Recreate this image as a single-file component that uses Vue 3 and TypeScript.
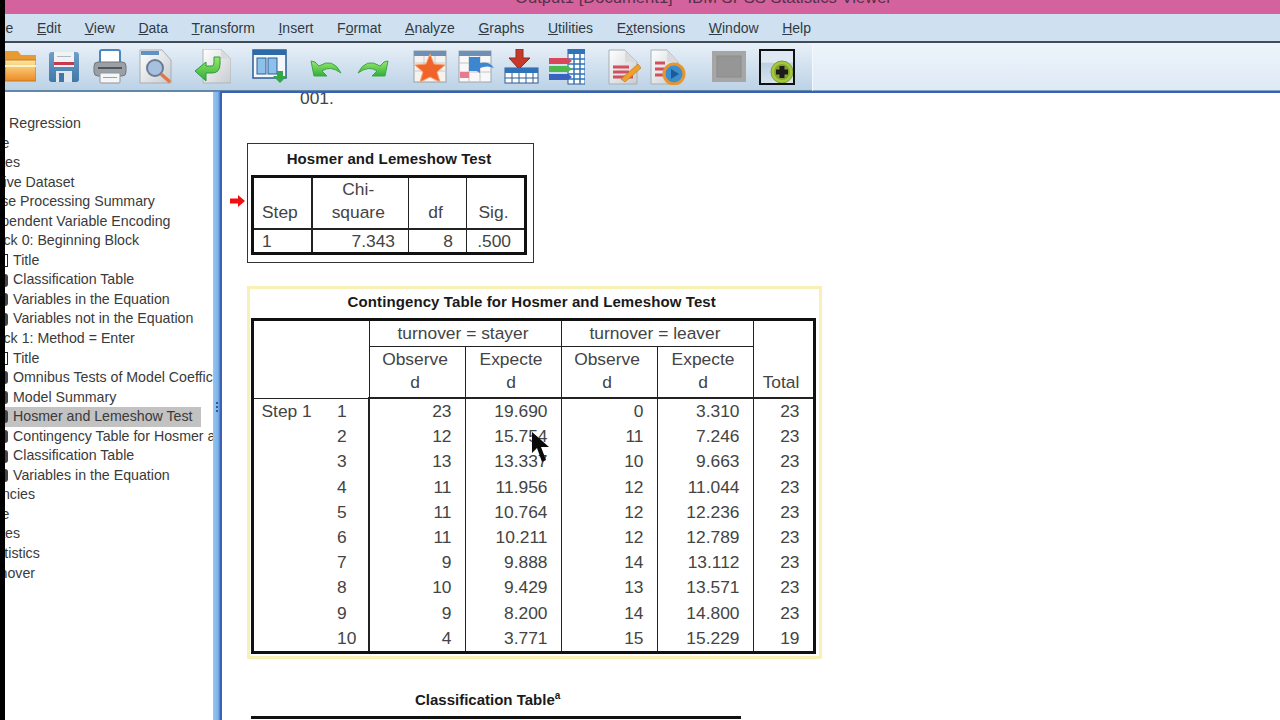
<script setup lang="ts">
interface MenuItem {
  pre: string
  key: string
  post: string
}
interface TreeRow {
  text: string
  level: 'root' | 'sub' | 'leaf' | 'title'
  selected?: boolean
}

const menus: MenuItem[] = [
  { pre: '', key: 'F', post: 'ile' },
  { pre: '', key: 'E', post: 'dit' },
  { pre: '', key: 'V', post: 'iew' },
  { pre: '', key: 'D', post: 'ata' },
  { pre: '', key: 'T', post: 'ransform' },
  { pre: '', key: 'I', post: 'nsert' },
  { pre: 'F', key: 'o', post: 'rmat' },
  { pre: '', key: 'A', post: 'nalyze' },
  { pre: '', key: 'G', post: 'raphs' },
  { pre: '', key: 'U', post: 'tilities' },
  { pre: 'E', key: 'x', post: 'tensions' },
  { pre: '', key: 'W', post: 'indow' },
  { pre: '', key: 'H', post: 'elp' }
]

const tree: TreeRow[] = [
  { text: 'Logistic Regression', level: 'root' },
  { text: 'Title', level: 'sub' },
  { text: 'Notes', level: 'sub' },
  { text: 'Active Dataset', level: 'sub' },
  { text: 'Case Processing Summary', level: 'sub' },
  { text: 'Dependent Variable Encoding', level: 'sub' },
  { text: 'Block 0: Beginning Block', level: 'sub' },
  { text: 'Title', level: 'title' },
  { text: 'Classification Table', level: 'leaf' },
  { text: 'Variables in the Equation', level: 'leaf' },
  { text: 'Variables not in the Equation', level: 'leaf' },
  { text: 'Block 1: Method = Enter', level: 'sub' },
  { text: 'Title', level: 'title' },
  { text: 'Omnibus Tests of Model Coefficients', level: 'leaf' },
  { text: 'Model Summary', level: 'leaf' },
  { text: 'Hosmer and Lemeshow Test', level: 'leaf', selected: true },
  { text: 'Contingency Table for Hosmer and Lemeshow Test', level: 'leaf' },
  { text: 'Classification Table', level: 'leaf' },
  { text: 'Variables in the Equation', level: 'leaf' },
  { text: 'Frequencies', level: 'root' },
  { text: 'Title', level: 'sub' },
  { text: 'Notes', level: 'sub' },
  { text: 'Statistics', level: 'sub' },
  { text: 'turnover', level: 'sub' }
]

const contingency: string[][] = [
  ['1', '23', '19.690', '0', '3.310', '23'],
  ['2', '12', '15.754', '11', '7.246', '23'],
  ['3', '13', '13.337', '10', '9.663', '23'],
  ['4', '11', '11.956', '12', '11.044', '23'],
  ['5', '11', '10.764', '12', '12.236', '23'],
  ['6', '11', '10.211', '12', '12.789', '23'],
  ['7', '9', '9.888', '14', '13.112', '23'],
  ['8', '10', '9.429', '13', '13.571', '23'],
  ['9', '9', '8.200', '14', '14.800', '23'],
  ['10', '4', '3.771', '15', '15.229', '19']
]
</script>

<template>
  <div class="app">
    <div class="edge" />
    <div class="window">
      <div class="titlebar">
        <span class="title-text">Output1 [Document1] - IBM SPSS Statistics Viewer</span>
      </div>

      <nav class="menubar">
        <span v-for="m in menus" :key="m.key + m.post" class="menu-item">{{ m.pre }}<u>{{ m.key }}</u>{{ m.post }}</span>
      </nav>

      <div class="toolbar">
        <div class="tools">
          <div class="group first-group">
            <svg class="tool" viewBox="0 0 36 36">
              <defs>
                <linearGradient id="gFolder" x1="0" y1="0" x2="0" y2="1">
                  <stop offset="0" stop-color="#fde7a0" />
                  <stop offset="1" stop-color="#ee8a22" />
                </linearGradient>
                <linearGradient id="gBlue" x1="0" y1="0" x2="0" y2="1">
                  <stop offset="0" stop-color="#6f9fc8" />
                  <stop offset="1" stop-color="#3f78a8" />
                </linearGradient>
                <linearGradient id="gGreen" x1="0" y1="0" x2="0" y2="1">
                  <stop offset="0" stop-color="#9be86a" />
                  <stop offset="1" stop-color="#2fae3c" />
                </linearGradient>
                <linearGradient id="gPaper" x1="0" y1="0" x2="1" y2="1">
                  <stop offset="0" stop-color="#ffffff" />
                  <stop offset="1" stop-color="#c8ccd0" />
                </linearGradient>
              </defs>
              <path d="M5 2 L18 2 L21 6 L36 6 L36 12 L5 12 Z" fill="#e89a32" />
              <path d="M5 11 L36 11 L36 32 L5 32 Z" fill="url(#gFolder)" stroke="#c9781e" />
              <path d="M5 17 L36 17" stroke="#fff3c8" stroke-width="2" />
            </svg>
            <svg class="tool" viewBox="0 0 36 36">
              <rect x="3" y="3" width="30" height="30" rx="3" fill="url(#gBlue)" />
              <rect x="8" y="3" width="20" height="15" fill="#f0f2f4" />
              <rect x="8" y="13" width="20" height="3" fill="#c8384e" />
              <rect x="11" y="7" width="14" height="1" fill="#b0b8c0" />
              <rect x="10" y="22" width="16" height="11" fill="#dfe6ec" />
              <rect x="13" y="24" width="5" height="9" fill="#3f78a8" />
            </svg>
            <svg class="tool" viewBox="0 0 36 36">
              <path d="M8 14 L8 3 Q8 1 10 1 L26 1 Q28 1 28 3 L28 14 Z" fill="#fff" stroke="#4a86bc" stroke-width="2" />
              <rect x="2" y="13" width="32" height="14" rx="4" fill="#9aa0a6" stroke="#70767c" />
              <rect x="6" y="18" width="24" height="2" fill="#50565c" />
              <rect x="8" y="24" width="20" height="10" rx="1" fill="#f4f6f8" stroke="#90969c" />
              <rect x="11" y="28" width="14" height="1" fill="#9aa0a6" />
            </svg>
            <svg class="tool" viewBox="0 0 36 36">
              <path d="M2 1 L24 1 L33 11 L33 34 L2 34 Z" fill="url(#gPaper)" stroke="#a8aeb4" />
              <rect x="3" y="2" width="18" height="4" fill="#5f93c4" />
              <circle cx="17" cy="19" r="8" fill="#a8c0e0" stroke="#6a7c94" stroke-width="2" />
              <path d="M23 25 L32 33" stroke="#e0764a" stroke-width="3.5" />
            </svg>
          </div>
          <div class="group">
            <svg class="tool" viewBox="0 0 36 36">
              <path d="M8 0 L26 0 L36 10 L36 34 L8 34 Z" fill="url(#gPaper)" stroke="#b0b4b8" />
              <path d="M26 0 L26 10 L36 10 Z" fill="#d8dadc" />
              <path d="M0 22 L11 13 L11 17 L17 17 Q19 17 19 14 L19 8 L25 8 L25 15 Q25 24 17 24 L11 24 L11 32 Z" fill="url(#gGreen)" stroke="#2d9a40" />
            </svg>
          </div>
          <div class="group">
            <svg class="tool" viewBox="0 0 36 36">
              <rect x="1" y="1" width="33" height="28" fill="#f4f8fc" stroke="#2c5c94" stroke-width="1.5" />
              <rect x="1" y="1" width="33" height="5" fill="#2f6aa8" />
              <rect x="5" y="9" width="9" height="16" fill="#8ec0ec" stroke="#2c5c94" />
              <rect x="16" y="9" width="9" height="16" fill="#8ec0ec" stroke="#2c5c94" />
              <path d="M25 22 L31 22 L31 27 L35 27 L28 34 L21 27 L25 27 Z" fill="#35a846" />
            </svg>
          </div>
          <div class="group">
            <svg class="tool" viewBox="0 0 36 36">
              <path d="M2 12 L5 27 L18 27 L13 22 Q21 16 32 24 Q24 8 10 17 L6 13 Z" fill="url(#gGreen)" stroke="#3aa84a" />
            </svg>
            <svg class="tool" viewBox="0 0 36 36">
              <path d="M34 12 L31 27 L18 27 L23 22 Q15 16 4 24 Q12 8 26 17 L30 13 Z" fill="url(#gGreen)" stroke="#3aa84a" />
            </svg>
          </div>
          <div class="group star-group">
            <svg class="tool" viewBox="0 0 36 36">
              <rect x="2" y="2" width="32" height="31" fill="#f6f2ee" stroke="#9aa0a6" />
              <rect x="2" y="2" width="32" height="5" fill="#6e8fb8" />
              <path d="M2 14 H34 M2 22 H34 M12 7 V33 M23 7 V33" stroke="#c8ccd0" />
              <path d="M18 5 L22 15 L33 16 L25 23 L28 33 L18 28 L8 33 L11 23 L3 16 L14 15 Z" fill="#f0642a" stroke="#f8a070" />
            </svg>
            <svg class="tool" viewBox="0 0 36 36">
              <rect x="1" y="2" width="32" height="31" fill="#f8f8f8" stroke="#a0a6ac" />
              <rect x="1" y="2" width="32" height="5" fill="#6e8fb8" />
              <path d="M1 14 H33 M1 23 H33 M11 7 V33 M22 7 V33" stroke="#c0c4c8" />
              <rect x="2" y="23" width="9" height="6" fill="#e87a90" />
              <rect x="11" y="8" width="11" height="14" fill="#3d86d0" />
              <path d="M12 18 L22 10 L22 14 Q31 12 36 19 Q29 16 22 19 L22 24 Z" fill="#3d86d0" />
            </svg>
            <svg class="tool" viewBox="0 0 36 36">
              <path d="M13 0 L20 0 L20 9 L27 9 L16 20 L6 9 L13 9 Z" fill="#c8382a" stroke="#8e2a20" />
              <rect x="2" y="19" width="33" height="15" fill="#fff" stroke="#2c5c94" />
              <rect x="2" y="19" width="33" height="5" fill="#2f72b8" />
              <path d="M2 29 H35 M9 24 V34 M16 24 V34 M23 24 V34 M30 24 V34" stroke="#2c5c94" />
            </svg>
            <svg class="tool" viewBox="0 0 36 36">
              <rect x="19" y="0" width="17" height="35" fill="#fff" stroke="#1e5aa0" />
              <rect x="19" y="0" width="17" height="5" fill="#2f72b8" />
              <path d="M19 10 H36 M19 15 H36 M19 20 H36 M19 25 H36 M19 30 H36 M25 5 V35 M31 5 V35" stroke="#2f72b8" stroke-width="1.5" />
              <path d="M0 9 L19 9 L23 12 L19 15 L0 15 Z" fill="#d8485a" />
              <path d="M0 17 L19 17 L23 20 L19 23 L0 23 Z" fill="#4cb84e" />
              <path d="M0 25 L19 25 L23 28 L19 31 L0 31 Z" fill="#3a62c0" />
            </svg>
          </div>
          <div class="group docs-group">
            <svg class="tool" viewBox="0 0 36 36">
              <path d="M4 1 L20 1 L32 13 L32 35 L4 35 Z" fill="url(#gPaper)" stroke="#a8aeb4" />
              <path d="M20 1 L20 13 L32 13 Z" fill="#d8dadc" />
              <path d="M8 18 H24 M8 23 H24 M8 28 H28" stroke="#d0505e" stroke-width="3" />
              <path d="M16 30 L33 15 L36 19 L20 33 Z" fill="#f0a028" stroke="#b87010" stroke-width="0.6" />
            </svg>
            <svg class="tool" viewBox="0 0 36 36">
              <path d="M1 1 L17 1 L28 13 L28 35 L1 35 Z" fill="url(#gPaper)" stroke="#a8aeb4" />
              <path d="M17 1 L17 13 L28 13 Z" fill="#d8dadc" />
              <path d="M5 14 H15 M5 20 H18 M5 26 H15" stroke="#d0505e" stroke-width="3" />
              <circle cx="24" cy="25" r="10" fill="#3c8ed0" stroke="#e8962c" stroke-width="3" />
              <path d="M21 20 L29 25 L21 30 Z" fill="#1e5a96" />
            </svg>
          </div>
          <div class="group gray-group">
            <svg class="tool" viewBox="0 0 36 36">
              <rect x="1" y="2" width="34" height="31" fill="#a6a6a6" />
              <rect x="6" y="7" width="24" height="21" fill="#969696" stroke="#8c8c8c" />
            </svg>
          </div>
          <div class="group active-group">
            <div class="active-tool">
              <svg class="tool" viewBox="0 0 36 36">
                <circle cx="23" cy="23" r="11" fill="#a6c83c" stroke="#7e9e2c" />
                <circle cx="23" cy="23" r="8" fill="#84a230" />
                <path d="M20.5 17 H25.5 V20.5 H29 V25.5 H25.5 V29 H20.5 V25.5 H17 V20.5 H20.5 Z" fill="#1c1c1c" />
              </svg>
            </div>
          </div>
        </div>
        <div class="toolbar-rest" />
      </div>

      <div class="workspace">
        <aside class="outline">
          <div
            v-for="(row, i) in tree"
            :key="i"
            class="tree-row"
            :class="[row.level, { selected: row.selected }]"
          >
            <span v-if="row.level === 'leaf'" class="node-book" />
            <span v-if="row.level === 'title'" class="node-title" />
            <span class="tree-text">{{ row.text }}</span>
          </div>
        </aside>

        <div class="splitter"><span class="grip" /></div>

        <main class="viewer">
          <p class="cut-note">001.</p>

          <section class="pivot-box">
            <div class="pivot-title">Hosmer and Lemeshow Test</div>
            <table class="pivot hosmer">
              <colgroup>
                <col class="h1" /><col class="h2" /><col class="h3" /><col class="h4" />
              </colgroup>
              <thead>
                <tr>
                  <th class="left">Step</th>
                  <th>Chi-<br />square</th>
                  <th>df</th>
                  <th>Sig.</th>
                </tr>
              </thead>
              <tbody>
                <tr>
                  <td class="left">1</td>
                  <td>7.343</td>
                  <td>8</td>
                  <td>.500</td>
                </tr>
              </tbody>
            </table>
          </section>

          <section class="pivot-box active">
            <div class="pivot-title">Contingency Table for Hosmer and Lemeshow Test</div>
            <table class="pivot contingency">
              <colgroup>
                <col class="c1" /><col class="c2" /><col class="c3" /><col class="c3" /><col class="c3" /><col class="c3" /><col class="c4" />
              </colgroup>
              <thead>
                <tr class="head-top">
                  <th colspan="2" rowspan="2" class="corner" />
                  <th colspan="2">turnover = stayer</th>
                  <th colspan="2">turnover = leaver</th>
                  <th rowspan="2">Total</th>
                </tr>
                <tr>
                  <th>Observe<br />d</th>
                  <th>Expecte<br />d</th>
                  <th>Observe<br />d</th>
                  <th>Expecte<br />d</th>
                </tr>
              </thead>
              <tbody>
                <tr v-for="(row, i) in contingency" :key="row[0]">
                  <td class="left step">{{ i === 0 ? 'Step 1' : '' }}</td>
                  <td class="left index">{{ row[0] }}</td>
                  <td v-for="(val, j) in row.slice(1)" :key="j">{{ val }}</td>
                </tr>
              </tbody>
            </table>
          </section>

          <div class="next-title">Classification Table<sup>a</sup></div>
          <div class="next-rule" />

          <svg class="arrow-mark" viewBox="0 0 15 12">
            <path d="M0 3.5 H8 V0 L15 6 L8 12 V8.5 H0 Z" fill="#f01010" />
          </svg>
        </main>
      </div>
    </div>

    <svg class="cursor" viewBox="0 0 18 31">
      <path d="M0 0 L0 21 L5 16 L10 30 L14 28 L9 15 L17 15 Z" fill="#0a0a0a" />
    </svg>
  </div>
</template>

<style scoped>
.app {
  position: relative;
  display: flex;
  width: 1280px;
  height: 720px;
  overflow: hidden;
  background: #fff;
  font-family: "Liberation Sans", Arial, sans-serif;
  color: #333;
}
.edge {
  width: 5px;
  flex: none;
  background: #000;
}
.window {
  flex: 1;
  min-width: 0;
  display: flex;
  flex-direction: column;
  overflow: hidden;
}

.titlebar {
  height: 14px;
  flex: none;
  overflow: hidden;
  background: #d4629c;
  padding-left: 510px;
}
.title-text {
  display: block;
  margin-top: -12px;
  font-size: 16.6px;
  line-height: 20px;
  white-space: nowrap;
  color: #55304a;
}

.menubar {
  height: 27px;
  flex: none;
  display: flex;
  align-items: center;
  background: #cfe1f0;
  border-bottom: 2px solid #3f4b55;
  margin-left: -26px;
  font-size: 14px;
  color: #2f3a44;
}
.menu-item {
  padding: 0 11.8px;
  white-space: nowrap;
}

.toolbar {
  height: 49px;
  flex: none;
  display: flex;
}
.tools {
  width: 812px;
  flex: none;
  display: flex;
  gap: 21px;
  padding-top: 6px;
  box-sizing: border-box;
  margin-left: -5px;
  background: linear-gradient(#e8f0f8, #bcd2e6);
  border-bottom: 2px solid #5f88ab;
}
.toolbar-rest {
  flex: 1;
  background: linear-gradient(#edf4fb, #dfeaf5);
  border-left: 1px solid #f4f8fc;
  border-bottom: 2px solid #7fa3c4;
}
.group {
  display: flex;
  gap: 9px;
}
.first-group {
  gap: 10px;
}
.tool {
  width: 36px;
  height: 36px;
  flex: none;
  display: block;
}
.star-group {
  margin-left: 1px;
}
.star-group .tool + .tool {
  margin-left: 0.5px;
}
.docs-group {
  margin-left: -1px;
}
.gray-group {
  margin-left: 4px;
}
.active-group {
  margin-left: -9px;
}
.active-tool {
  width: 36px;
  height: 36px;
  border: 2px solid #111;
  box-sizing: border-box;
  background: linear-gradient(#dfe9f3 0, #dfe9f3 35%, #bcd0e2 38%, #d4e2ee 100%);
  overflow: hidden;
}
.active-tool .tool {
  margin: -2px;
}

.workspace {
  flex: 1;
  min-height: 0;
  display: flex;
}

.outline {
  width: 208px;
  flex: none;
  overflow: hidden;
  padding-top: 22px;
  box-sizing: border-box;
  font-size: 14.2px;
  color: #3a3a3a;
}
.tree-row {
  height: 19.55px;
  line-height: 19.55px;
  display: flex;
  align-items: center;
  white-space: nowrap;
}
.tree-row.root {
  margin-left: -48px;
}
.tree-row.sub {
  margin-left: -22px;
}
.tree-row.selected {
  width: 196px;
  background: #c2c2c2;
}
.tree-text {
  flex: none;
}
.node-book,
.node-title {
  width: 3px;
  height: 13px;
  flex: none;
  margin-right: 5px;
  box-sizing: border-box;
}
.node-book {
  background: #444;
  border-radius: 0 3px 3px 0;
}
.node-title {
  border: 1.5px solid #222;
  border-left: 0;
}

.splitter {
  width: 7px;
  flex: none;
  display: flex;
  align-items: center;
  justify-content: center;
  background: linear-gradient(90deg, #a9c4dc 0, #8cc0f0 20%, #7db4ea 70%, #4f7fc4 100%);
}
.grip {
  width: 2px;
  height: 12px;
  margin-top: 4px;
  background: repeating-linear-gradient(#2f5a96 0, #2f5a96 2px, transparent 2px, transparent 4px);
}

.viewer {
  position: relative;
  flex: 1;
  min-width: 0;
  margin-top: -1px;
  overflow: hidden;
  background: #fff;
  border-left: 2px solid #3d5fb4;
  border-top: 2px solid #3d5fb4;
  font-size: 17.4px;
  color: #444;
}
.cut-note {
  margin: -5px 0 0 78px;
  line-height: 20px;
  height: 20px;
}

.pivot-box {
  width: 287px;
  margin: 35px 0 0 25px;
  box-sizing: border-box;
  border: 1px solid #333;
  padding-left: 3px;
}
.pivot-box.active {
  width: 575px;
  margin-top: 23px;
  border: 3px solid #f8f0b4;
  padding-left: 0.5px;
  padding-bottom: 2px;
}
.pivot-title {
  height: 29px;
  line-height: 26px;
  font-size: 15px;
  font-weight: 700;
  letter-spacing: 0.1px;
  text-align: center;
  color: #1a1a1a;
  padding-right: 6px;
  white-space: nowrap;
}
.pivot-box:not(.active) .pivot-title {
  height: 31px;
  line-height: 30px;
}
.pivot {
  border-collapse: collapse;
  table-layout: fixed;
  border: 3px solid #111;
}
.pivot th,
.pivot td {
  padding: 0 13px 0 0;
  font-weight: 400;
  text-align: right;
  border-left: 1.5px solid #222;
}
.pivot th {
  text-align: center;
  vertical-align: bottom;
  line-height: 23px;
  padding: 0 4px 4px 0;
  border-bottom: 2px solid #222;
}
.pivot .left {
  text-align: left;
  padding-left: 8px;
}

.hosmer {
  width: 273px;
  margin-bottom: 7px;
}
.h1 {
  width: 59px;
}
.h2 {
  width: 97px;
}
.h3 {
  width: 58px;
}
.h4 {
  width: 59px;
}
.hosmer th:first-child,
.hosmer td:first-child {
  border-left: 0;
}
.hosmer th:nth-child(2),
.hosmer td:nth-child(2) {
  border-left-width: 2px;
}
.hosmer td {
  height: 22px;
  line-height: 22px;
}

.contingency {
  width: 562px;
}
.c1 {
  width: 85px;
}
.c2 {
  width: 32px;
}
.c3 {
  width: 96px;
}
.c4 {
  width: 61px;
}
.contingency .head-top th {
  height: 25px;
  padding: 0 4px 0 0;
  vertical-align: middle;
  border-bottom-width: 1.5px;
}
.contingency .head-top th[rowspan]:not(.corner) {
  vertical-align: bottom;
  padding-bottom: 3px;
  border-bottom-width: 2px;
}
.contingency .corner {
  border-left: 0;
  border-bottom-width: 2px;
}
.contingency thead tr:last-child th {
  height: 47px;
  padding-bottom: 3px;
}
.contingency td {
  height: 25.2px;
  line-height: 25.2px;
}
.contingency td.step {
  border-left: 0;
  padding-right: 0;
  white-space: nowrap;
}
.contingency td.index {
  border-left: 0;
  padding: 0;
}
.contingency tbody td:nth-child(3) {
  border-left-width: 2px;
}

.next-title {
  margin: 31px 0 0 193px;
  height: 26px;
  line-height: 20px;
  font-size: 15px;
  font-weight: 700;
  color: #1a1a1a;
}
.next-title sup {
  font-size: 10px;
  line-height: 0;
}
.next-rule {
  width: 490px;
  height: 3px;
  margin-left: 29px;
  background: #111;
}

.arrow-mark {
  position: absolute;
  left: 8px;
  top: 102px;
  width: 15px;
  height: 12px;
}
.cursor {
  position: absolute;
  left: 531.5px;
  top: 431.5px;
  width: 18px;
  height: 31px;
}
</style>
